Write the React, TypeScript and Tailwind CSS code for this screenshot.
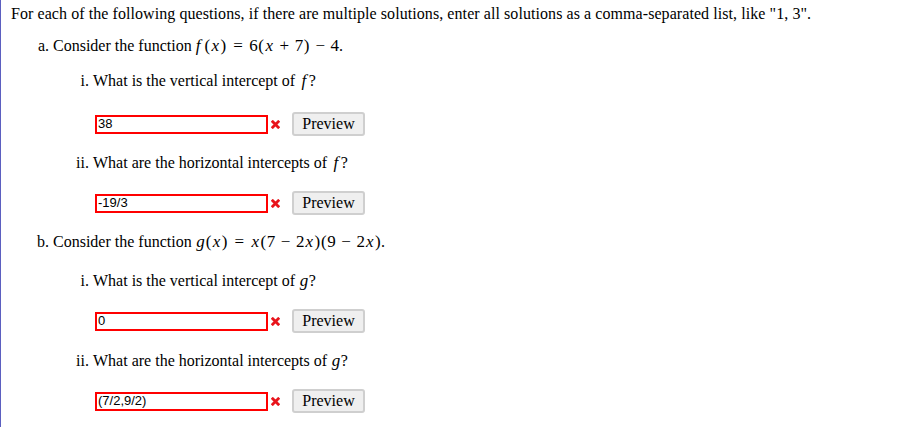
import React from "react";

const serif = { fontFamily: '"Liberation Serif", "Times New Roman", serif' };

// MathJax-like inline math: wider glyph boxes and operator spacing
function Math({ children }: { children: React.ReactNode }) {
  return <span className="text-[17px] leading-[18px]">{children}</span>;
}

function V({ children }: { children: React.ReactNode }) {
  return <span className="inline-block w-[0.56em] text-center italic">{children}</span>;
}

function P({ children }: { children: React.ReactNode }) {
  return <span className="inline-block w-[0.39em] text-center">{children}</span>;
}

function D({ children }: { children: React.ReactNode }) {
  return <span className="inline-block w-[0.5em] text-center">{children}</span>;
}

function Bin({ children }: { children: React.ReactNode }) {
  return <span className="inline-block w-[1.22em] text-center">{children}</span>;
}

function Rel({ children }: { children: React.ReactNode }) {
  return <span className="inline-block w-[1.33em] text-center">{children}</span>;
}

function Cross() {
  return (
    <svg width="9" height="9" viewBox="0 0 9 9" className="ml-[3px]">
      <path d="M1.8 1.8 L7.2 7.2 M7.2 1.8 L1.8 7.2" stroke="#e8141b" strokeWidth="2.8" strokeLinecap="square" />
    </svg>
  );
}

function AnswerRow({ value, className }: { value: string; className: string }) {
  return (
    <div className={`flex items-center pl-[84px] ${className}`}>
      <input
        readOnly
        value={value}
        className="h-[19px] w-[173px] border-2 border-[#ff0000] bg-white px-[1px] text-[13px] text-black outline-none"
        style={{ fontFamily: '"Liberation Sans", Arial, sans-serif' }}
      />
      <Cross />
      <button className="ml-[12px] h-[24px] w-[73px] rounded-[3px] border-2 border-[#cfcfcf] bg-[#efefef] text-[16px] leading-none text-black">
        Preview
      </button>
    </div>
  );
}

function Item({
  marker,
  markerWidth,
  children,
  className,
}: {
  marker: string;
  markerWidth: string;
  children: React.ReactNode;
  className: string;
}) {
  return (
    <div className={`flex leading-[18px] ${className}`}>
      <span className={`${markerWidth} shrink-0 pr-[4px] text-right`}>{marker}</span>
      <span>{children}</span>
    </div>
  );
}

export default function App() {
  return (
    <div
      className="h-[427px] w-[911px] border-l border-[#5b5fc0] bg-white pl-[10px] pt-[5px] text-[16px] text-black"
      style={serif}
    >
      <p className="leading-[18px] tracking-[0.07px]">
        For each of the following questions, if there are multiple solutions, enter all solutions as a
        comma-separated list, like "1, 3".
      </p>

      <Item marker="a." markerWidth="w-[42px]" className="mt-[14px]">
        Consider the function{" "}
        <Math>
          <span className="inline-block w-[0.49em] italic">f</span>
          <P>(</P>
          <V>x</V>
          <P>)</P>
          <Rel>=</Rel>
          <D>6</D>
          <P>(</P>
          <V>x</V>
          <Bin>+</Bin>
          <D>7</D>
          <P>)</P>
          <Bin>−</Bin>
          <D>4</D>
        </Math>
        .
      </Item>

      <Item marker="i." markerWidth="w-[82px]" className="mt-[17px]">
        What is the vertical intercept of <Math><V>f</V></Math>?
      </Item>
      <AnswerRow value="38" className="mt-[22px]" />

      <Item marker="ii." markerWidth="w-[82px]" className="mt-[18px]">
        What are the horizontal intercepts of <Math><V>f</V></Math>?
      </Item>
      <AnswerRow value="-19/3" className="mt-[19px]" />

      <Item marker="b." markerWidth="w-[42px]" className="mt-[18px]">
        Consider the function{" "}
        <Math>
          <V>g</V>
          <P>(</P>
          <V>x</V>
          <P>)</P>
          <Rel>=</Rel>
          <V>x</V>
          <P>(</P>
          <D>7</D>
          <Bin>−</Bin>
          <D>2</D>
          <V>x</V>
          <P>)</P>
          <P>(</P>
          <D>9</D>
          <Bin>−</Bin>
          <D>2</D>
          <V>x</V>
          <P>)</P>
        </Math>
        .
      </Item>

      <Item marker="i." markerWidth="w-[82px]" className="mt-[21px]">
        What is the vertical intercept of <Math><V>g</V></Math>?
      </Item>
      <AnswerRow value="0" className="mt-[19px]" />

      <Item marker="ii." markerWidth="w-[82px]" className="mt-[19px]">
        What are the horizontal intercepts of <Math><V>g</V></Math>?
      </Item>
      <AnswerRow value="(7/2,9/2)" className="mt-[19px]" />
    </div>
  );
}
